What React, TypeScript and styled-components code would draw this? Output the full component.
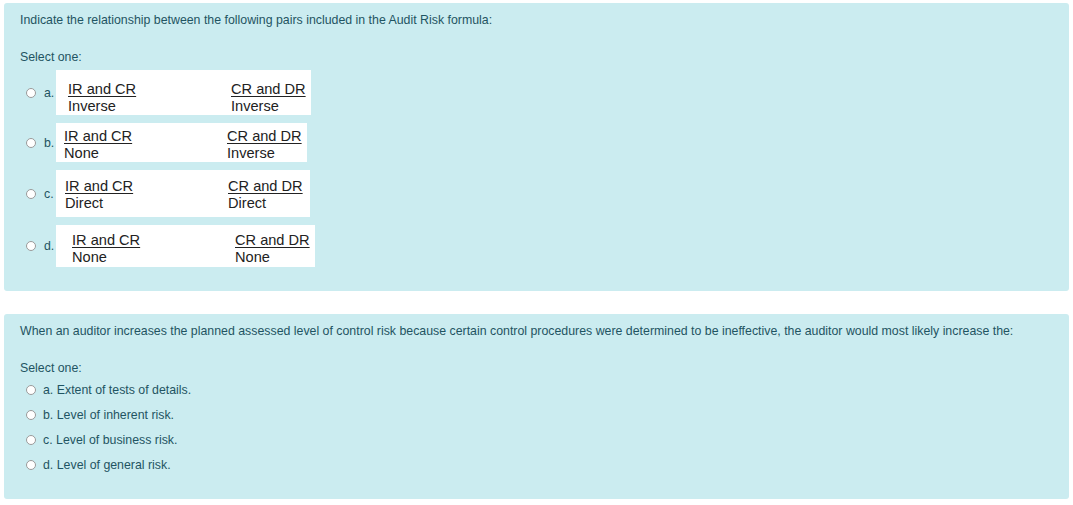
import React from 'react';
import styled, { createGlobalStyle } from 'styled-components';

const GlobalStyle = createGlobalStyle`
  html, body {
    margin: 0;
    padding: 0;
    background: #fff;
  }
  body {
    font-family: 'Liberation Sans', Arial, sans-serif;
  }
`;

const Page = styled.div`
  padding: 3px 4px;
  display: flex;
  flex-direction: column;
  gap: 23px;
`;

const Card = styled.div<{ $pad: string }>`
  background: #cbecf0;
  border-radius: 3px;
  padding: ${(p) => p.$pad};
  color: #1f5462;
  font-size: 12.35px;
  line-height: 16px;
`;

const QuestionText = styled.div``;

const SelectOne = styled.div`
  margin-top: 21px;
`;

const OptionList = styled.div<{ $gap: number; $top: number }>`
  display: flex;
  flex-direction: column;
  gap: ${(p) => p.$gap}px;
  margin-top: ${(p) => p.$top}px;
`;

const Option = styled.label<{ $h?: number }>`
  display: flex;
  align-items: center;
  padding-left: 6px;
  height: ${(p) => (p.$h ? `${p.$h}px` : 'auto')};
`;

const Radio = styled.span`
  width: 10px;
  height: 10px;
  border: 1px solid #9a9a9a;
  border-radius: 50%;
  background: #fff;
  flex: none;
  box-sizing: border-box;
`;

const Letter = styled.span`
  margin-left: 8px;
  width: 11px;
`;

const InlineText = styled.span`
  margin-left: 7px;
`;

const PairTable = styled.div<{ $pad: string; $w: number }>`
  margin-left: 1px;
  background: #fff;
  width: ${(p) => p.$w}px;
  box-sizing: border-box;
  padding: ${(p) => p.$pad};
  display: grid;
  grid-template-columns: 163px auto;
  font-size: 14.6px;
  line-height: 17px;
  color: #222;
`;

const PairCell = styled.div``;

const PairHead = styled.div`
  text-decoration: underline;
  text-underline-offset: 2px;
`;

type Pair = { ir: string; cr: string; pad: string; w: number; letter: string };

const pairs: Pair[] = [
  { letter: 'a.', ir: 'Inverse', cr: 'Inverse', pad: '11px 0 0 12px', w: 255 },
  { letter: 'b.', ir: 'None', cr: 'Inverse', pad: '5px 0 0 8px', w: 251 },
  { letter: 'c.', ir: 'Direct', cr: 'Direct', pad: '8px 0 5px 9px', w: 254 },
  { letter: 'd.', ir: 'None', cr: 'None', pad: '7px 0 1px 16px', w: 259 },
];

const answers = [
  'a. Extent of tests of details.',
  'b. Level of inherent risk.',
  'c. Level of business risk.',
  'd. Level of general risk.',
];

export default function App() {
  return (
    <>
      <GlobalStyle />
      <Page>
        <Card $pad="9px 16px 24px">
          <QuestionText>
            Indicate the relationship between the following pairs included in the Audit Risk formula:
          </QuestionText>
          <SelectOne>Select one:</SelectOne>
          <OptionList $gap={8} $top={5}>
            {pairs.map((p) => (
              <Option key={p.letter}>
                <Radio />
                <Letter>{p.letter}</Letter>
                <PairTable $pad={p.pad} $w={p.w}>
                  <PairCell>
                    <PairHead>IR and CR</PairHead>
                    {p.ir}
                  </PairCell>
                  <PairCell>
                    <PairHead>CR and DR</PairHead>
                    {p.cr}
                  </PairCell>
                </PairTable>
              </Option>
            ))}
          </OptionList>
        </Card>
        <Card $pad="9px 16px 22px">
          <QuestionText>
            When an auditor increases the planned assessed level of control risk because certain control procedures
            were determined to be ineffective, the auditor would most likely increase the:
          </QuestionText>
          <SelectOne>Select one:</SelectOne>
          <OptionList $gap={0} $top={1}>
            {answers.map((a) => (
              <Option key={a} $h={25}>
                <Radio />
                <InlineText>{a}</InlineText>
              </Option>
            ))}
          </OptionList>
        </Card>
      </Page>
    </>
  );
}
